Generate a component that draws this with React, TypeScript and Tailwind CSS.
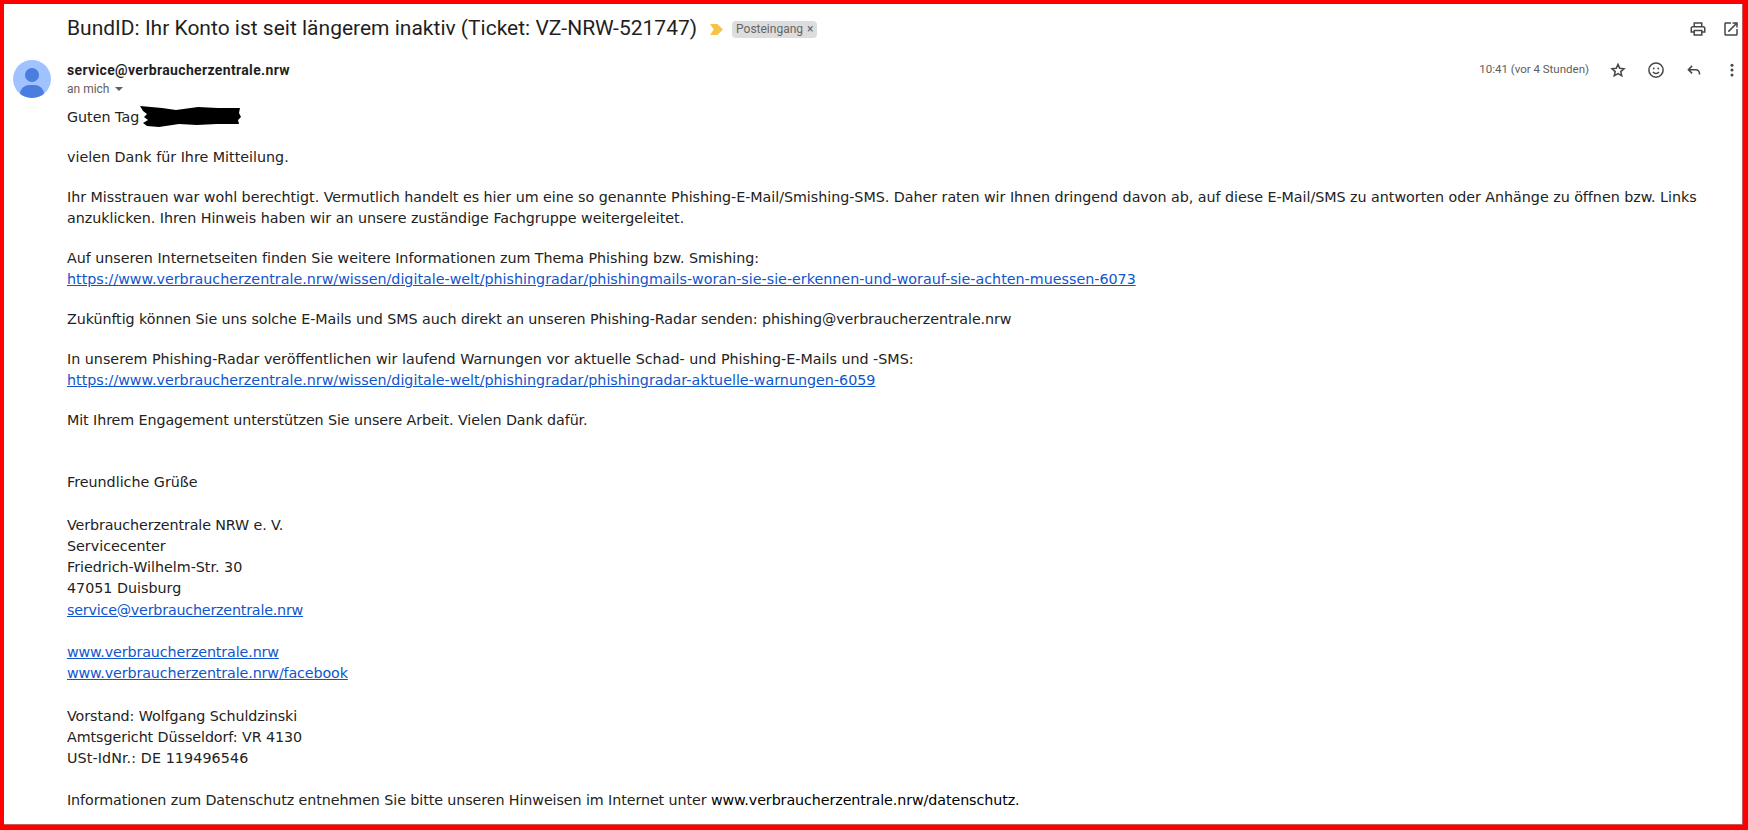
import React from 'react';

const link = 'text-[#1155cc] underline';

function Gap({ wide }: { wide?: boolean }) {
  return <div className={wide ? 'h-[21.200px]' : 'h-[18.700px]'} />;
}

function Icon({ d, className }: { d: string; className?: string }) {
  return (
    <svg viewBox="0 0 24 24" className={className} fill="currentColor">
      <path d={d} />
    </svg>
  );
}

export default function App() {
  return (
    <div className="w-[1748px] h-[830px] bg-[#ff0000] border-[4px] border-[#ff0000] overflow-hidden">
      <div className="h-[821px] w-[1739px] bg-white border-r border-b border-[#c85a5a] overflow-hidden flex flex-col font-['Roboto',sans-serif] text-[#222222]">
        <div className="flex items-center h-[48px] mt-[1px] mb-[3px] pl-[63px] pr-[2px] shrink-0">
          <h1 className="font-['Roboto',sans-serif] text-[21px] text-[#1f1f1f] font-normal whitespace-nowrap">
            BundID: Ihr Konto ist seit längerem inaktiv (Ticket: VZ-NRW-521747)
          </h1>
          <svg viewBox="0 0 14 12" className="w-[13px] h-[11px] ml-[13px]" fill="#f6c344">
            <path d="M0 0h8l6 6-6 6H0l4-6z" />
          </svg>
          <div className="ml-[9px] h-[17px] rounded-[4px] bg-[#dddddd] flex items-center px-[4px] text-[12px] text-[#666666] gap-[4px]">
            <span>Posteingang</span>
            <span className="text-[12px]">×</span>
          </div>
          <div className="ml-auto flex items-center gap-[15.500px] text-[#444746]">
            <Icon className="w-[18px] h-[18px]" d="M19 8h-1V3H6v5H5c-1.66 0-3 1.34-3 3v6h4v4h12v-4h4v-6c0-1.66-1.34-3-3-3zM8 5h8v3H8V5zm8 14H8v-4h8v4zm2-4v-2H6v2H4v-4c0-.55.45-1 1-1h14c.55 0 1 .45 1 1v4h-2z" />
            <Icon className="w-[18px] h-[18px]" d="M19 19H5V5h7V3H5c-1.1 0-2 .9-2 2v14c0 1.1.9 2 2 2h14c1.1 0 2-.9 2-2v-7h-2v7zM14 3v2h3.59l-9.83 9.83 1.41 1.41L19 6.41V10h2V3h-7z" />
          </div>
        </div>

        <div className="flex pl-[9px] pr-[1.500px] shrink-0">
          <div className="w-[38px] h-[38px] rounded-full bg-[#a0c3ff] overflow-hidden relative shrink-0 mt-[4px]">
            <div className="absolute left-[12px] top-[8px] w-[14px] h-[14px] rounded-full bg-[#4a7ddf]" />
            <div className="absolute left-[7px] top-[25px] w-[24px] h-[18px] rounded-full bg-[#4a7ddf]" />
          </div>
          <div className="ml-[16px] flex-1 min-w-0">
            <div className="flex items-center h-[20px] mt-[4px]">
              <span className="text-[14px] font-bold text-[#1f1f1f] tracking-[0.35px]">service@verbraucherzentrale.nrw</span>
              <span className="ml-auto text-[11.500px] text-[#5e5e5e]">10:41 (vor 4 Stunden)</span>
              <div className="flex items-center gap-[20px] ml-[19.500px] text-[#444746]">
                <svg viewBox="0 0 24 24" className="w-[18px] h-[18px]" fill="none" stroke="currentColor" strokeWidth="2">
                  <path d="M12 4.500l2.300 5.300 5.700.5-4.300 3.800 1.300 5.600-5-3-5 3 1.300-5.600L4 10.300l5.700-.5z" />
                </svg>
                <svg viewBox="0 0 24 24" className="w-[18px] h-[18px]" fill="none" stroke="currentColor" strokeWidth="2">
                  <circle cx="12" cy="12" r="9.500" />
                  <circle cx="9" cy="10" r="1.200" fill="currentColor" stroke="none" />
                  <circle cx="15" cy="10" r="1.200" fill="currentColor" stroke="none" />
                  <path d="M8 14.500c1 1.500 2.400 2.200 4 2.200s3-.7 4-2.200" />
                </svg>
                <svg viewBox="0 0 24 24" className="w-[18px] h-[18px]" fill="none" stroke="currentColor" strokeWidth="2">
                  <path d="M9.500 6.500L4.500 11.500l5 5M4.500 11.500H14c3.500 0 5.500 2.500 5.500 6.500" />
                </svg>
                <svg viewBox="0 0 24 24" className="w-[18px] h-[18px]" fill="currentColor">
                  <circle cx="12" cy="5.500" r="2" />
                  <circle cx="12" cy="12" r="2" />
                  <circle cx="12" cy="18.500" r="2" />
                </svg>
              </div>
            </div>
            <div className="flex items-center text-[12px] text-[#5e5e5e] h-[16px] mt-[1px]">
              an mich
              <svg viewBox="0 0 10 5" className="w-[8px] h-[4px] ml-[6px]" fill="#5e5e5e">
                <path d="M0 0h10L5 5z" />
              </svg>
            </div>
          </div>
        </div>

        <div className="pl-[63px] pr-[30px] font-['DejaVu_Sans',sans-serif] text-[14.290px] leading-[21.200px] mt-[9px] text-[#222222]">
          <p className="flex items-center">
            Guten Tag
            <svg viewBox="0 0 103 23" className="w-[103px] h-[23px] -my-[2px] -mt-[4px] ml-[-1px]" fill="#000000">
              <path d="M2 1l22 2 14 2 22-3 20 1 22 0-1 5 2 4-3 3 1 4-22 0-20 1-18-1-20 3-12-1-4-3 5-3-4-3 3-3-4-3z" />
            </svg>
          </p>
          <Gap />
          <p>vielen Dank für Ihre Mitteilung.</p>
          <Gap />
          <p className="tracking-[-0.03px]">
            Ihr Misstrauen war wohl berechtigt. Vermutlich handelt es hier um eine so genannte Phishing-E-Mail/Smishing-SMS. Daher raten wir Ihnen dringend davon ab, auf diese E-Mail/SMS zu antworten oder Anhänge zu öffnen bzw. Links anzuklicken. Ihren Hinweis haben wir an unsere zuständige Fachgruppe weitergeleitet.
          </p>
          <Gap />
          <p className="tracking-[-0.02px]">Auf unseren Internetseiten finden Sie weitere Informationen zum Thema Phishing bzw. Smishing:</p>
          <p className={link}>https://www.verbraucherzentrale.nrw/wissen/digitale-welt/phishingradar/phishingmails-woran-sie-sie-erkennen-und-worauf-sie-achten-muessen-6073</p>
          <Gap />
          <p className="tracking-[-0.07px]">Zukünftig können Sie uns solche E-Mails und SMS auch direkt an unseren Phishing-Radar senden: phishing@verbraucherzentrale.nrw</p>
          <Gap />
          <p>In unserem Phishing-Radar veröffentlichen wir laufend Warnungen vor aktuelle Schad- und Phishing-E-Mails und -SMS:</p>
          <p className={link}>https://www.verbraucherzentrale.nrw/wissen/digitale-welt/phishingradar/phishingradar-aktuelle-warnungen-6059</p>
          <Gap />
          <p className="tracking-[-0.09px]">Mit Ihrem Engagement unterstützen Sie unsere Arbeit. Vielen Dank dafür.</p>
          <div className="h-[41.200px]" />
          <p>Freundliche Grüße</p>
          <Gap wide />
          <p className="tracking-[-0.11px]">Verbraucherzentrale NRW e. V.</p>
          <p>Servicecenter</p>
          <p>Friedrich-Wilhelm-Str. 30</p>
          <p>47051 Duisburg</p>
          <p className={`${link} tracking-[-0.2px]`}>service@verbraucherzentrale.nrw</p>
          <Gap wide />
          <p className={`${link} tracking-[-0.12px]`}>www.verbraucherzentrale.nrw</p>
          <p className={`${link} tracking-[-0.12px]`}>www.verbraucherzentrale.nrw/facebook</p>
          <Gap wide />
          <p className="tracking-[-0.07px]">Vorstand: Wolfgang Schuldzinski</p>
          <p className="tracking-[-0.07px]">Amtsgericht Düsseldorf: VR 4130</p>
          <p className="tracking-[0.1px]">USt-IdNr.: DE 119496546</p>
          <Gap wide />
          <p className="tracking-[-0.09px]">Informationen zum Datenschutz entnehmen Sie bitte unseren Hinweisen im Internet unter <span className="text-black">www.verbraucherzentrale.nrw/datenschutz.</span></p>
        </div>
      </div>
    </div>
  );
}
